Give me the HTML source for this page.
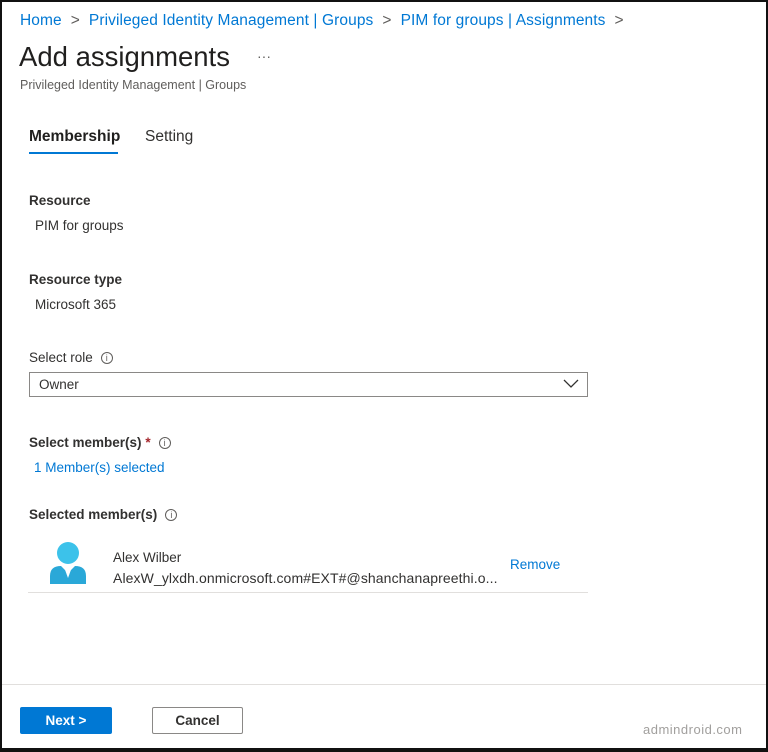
<!DOCTYPE html>
<html><head><meta charset="utf-8"><style>
*{margin:0;padding:0;box-sizing:border-box}
body{width:768px;height:752px;background:#fff;font-family:"Liberation Sans",sans-serif;color:#323130;position:relative;overflow:hidden}
.frame{position:absolute;left:0;top:0;width:768px;height:752px;border:2px solid #111;border-bottom-width:4px}
.a{position:absolute;white-space:nowrap}
.bc{color:#0078d4;font-size:15.5px;top:12px;left:20px;letter-spacing:0.1px}
.bc span{color:#605e5c;margin:0 9px}
.lbl{font-size:13.5px;font-weight:bold;color:#323130}
.val{font-size:13.5px;color:#323130}
.info{display:inline-block;width:12px;height:12px;border:1px solid #605e5c;border-radius:50%;font-size:9px;text-align:center;line-height:10px;color:#605e5c;font-weight:normal;vertical-align:1px;margin-left:8px}
</style></head><body>
<div class="frame"></div>
<div class="a bc">Home<span>&gt;</span>Privileged Identity Management | Groups<span>&gt;</span>PIM for groups | Assignments<span>&gt;</span></div>
<div class="a" style="top:41px;left:19px;font-size:27.5px;color:#201f1e">Add assignments</div>
<div class="a" style="top:48px;left:257px;font-size:14px;color:#605e5c">···</div>
<div class="a" style="top:78px;left:20px;font-size:12.5px;color:#605e5c">Privileged Identity Management | Groups</div>
<div class="a" style="top:128px;left:29px;font-size:15.5px;color:#201f1e;font-weight:600">Membership</div>
<div style="position:absolute;top:152px;left:29px;width:89px;height:2px;background:#0078d4"></div>
<div class="a" style="top:128px;left:145px;font-size:15.5px;color:#323130">Setting</div>
<div class="a lbl" style="top:193px;left:29px">Resource</div>
<div class="a val" style="top:218px;left:35px">PIM for groups</div>
<div class="a lbl" style="top:272px;left:29px">Resource type</div>
<div class="a val" style="top:297px;left:35px">Microsoft 365</div>
<div class="a val" style="top:350px;left:29px">Select role<span class="info">i</span></div>
<div style="position:absolute;top:372px;left:29px;width:559px;height:25px;border:1px solid #8a8886"></div>
<div class="a val" style="top:377px;left:39px">Owner</div>
<svg class="a" style="top:379px;left:563px" width="16" height="10"><path d="M1 1 L8 8 L15 1" stroke="#323130" stroke-width="1.3" fill="none"/></svg>
<div class="a lbl" style="top:435px;left:29px">Select member(s) <span style="color:#a4262c">*</span><span class="info">i</span></div>
<div class="a val" style="top:460px;left:34px;color:#0078d4">1 Member(s) selected</div>
<div class="a lbl" style="top:507px;left:29px">Selected member(s)<span class="info">i</span></div>
<svg class="a" style="top:540px;left:45px" width="46" height="46"><circle cx="23" cy="13" r="11" fill="#3cc2ea"/><path d="M5 44 L5 36 Q5 26 16 26 L23 33 L30 26 Q41 26 41 36 L41 44 Z" fill="#2aa8d8"/><path d="M19 27 L27 27 L23 38Z" fill="#fff"/></svg>
<div class="a val" style="top:550px;left:113px">Alex Wilber</div>
<div class="a val" style="top:570px;left:113px;font-size:14px;letter-spacing:0.1px">AlexW_ylxdh.onmicrosoft.com#EXT#@shanchanapreethi.o...</div>
<div class="a val" style="top:557px;left:510px;color:#0078d4">Remove</div>
<div style="position:absolute;top:592px;left:28px;width:560px;height:1px;background:#e1dfdd"></div>
<div style="position:absolute;top:684px;left:2px;width:764px;height:1px;background:#e1dfdd"></div>
<div style="position:absolute;top:707px;left:20px;width:92px;height:27px;background:#0078d4;border-radius:2px;color:#fff;font-size:13.5px;font-weight:bold;text-align:center;line-height:27px">Next &gt;</div>
<div style="position:absolute;top:707px;left:152px;width:91px;height:27px;border:1px solid #8a8886;border-radius:2px;color:#323130;font-size:13.5px;font-weight:bold;text-align:center;line-height:25px">Cancel</div>
<div class="a" style="top:722px;left:643px;font-size:13px;color:#a19f9d;letter-spacing:0.5px">admindroid.com</div>
</body></html>
